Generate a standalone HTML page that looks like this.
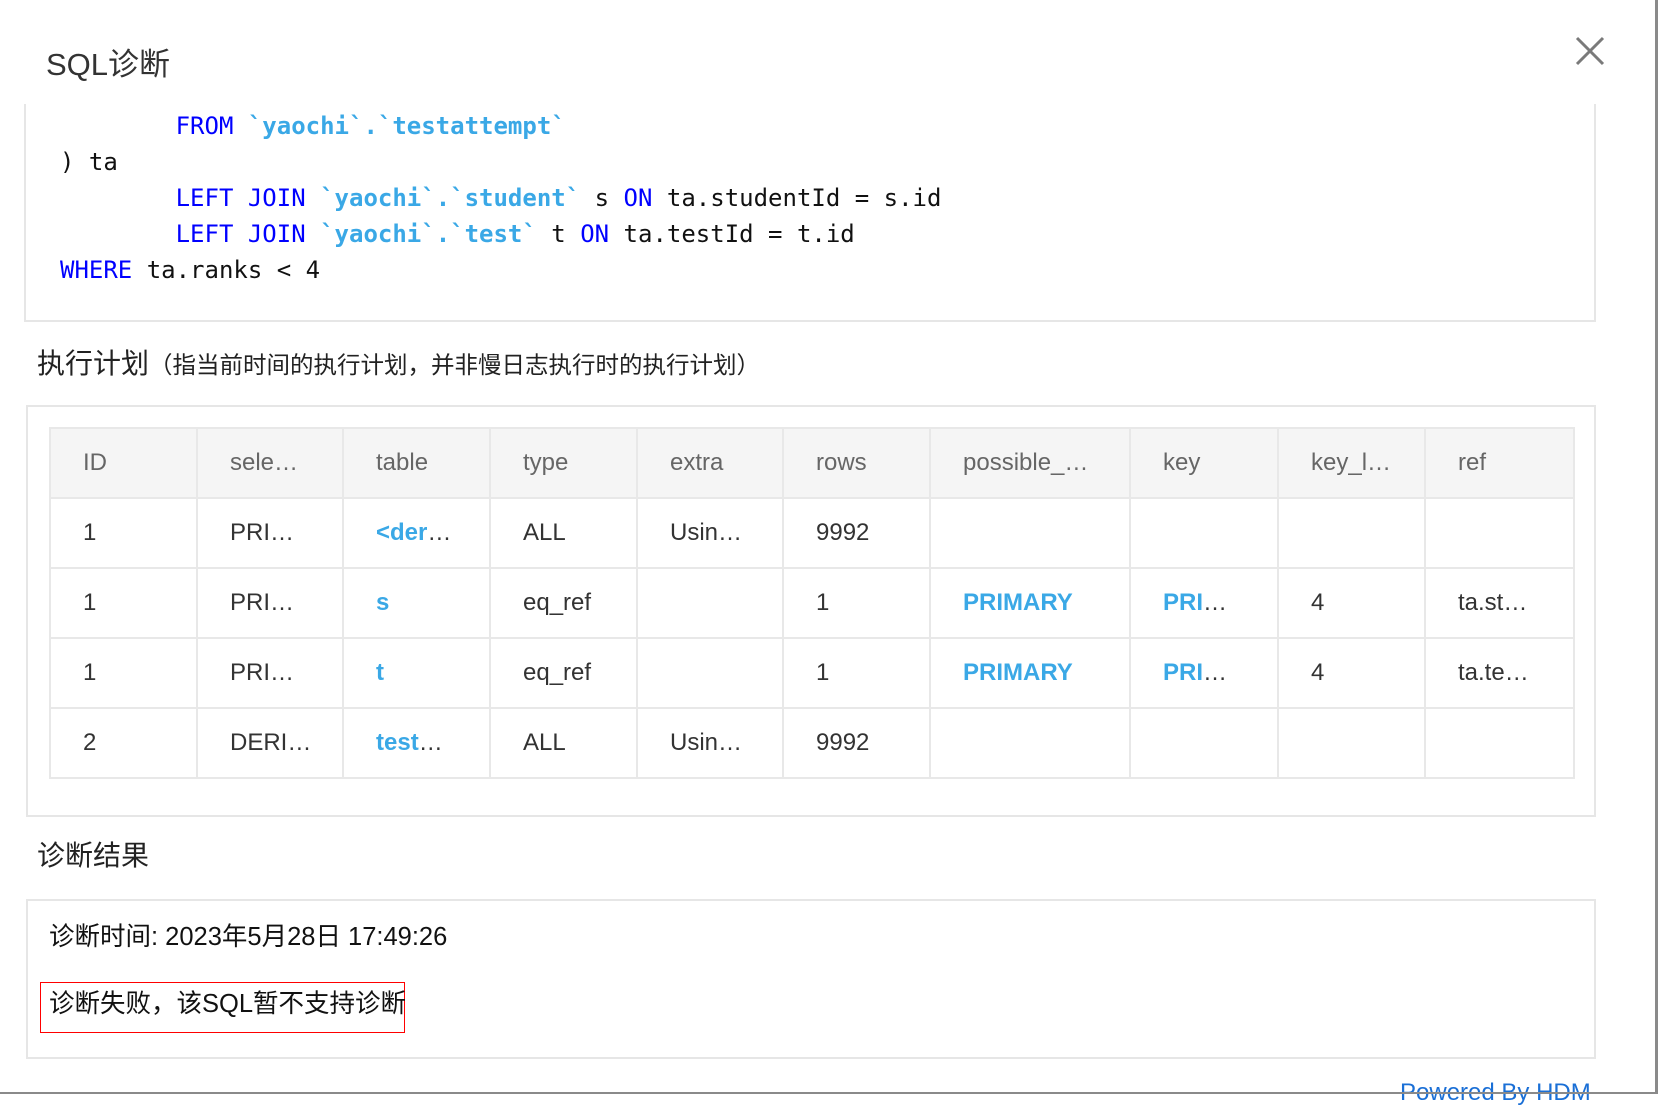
<!DOCTYPE html>
<html><head><meta charset="utf-8"><style>
*{margin:0;padding:0;box-sizing:border-box}
body{width:1658px;height:1094px;background:#fff;position:relative;overflow:hidden;font-family:"Liberation Sans","Noto Sans CJK SC",sans-serif;color:#222}
.abs{position:absolute;line-height:1.15}
.box{position:absolute;border:2px solid #e6e6e6;background:#fff}
.code{font-family:"DejaVu Sans Mono","Liberation Mono",monospace;font-size:24px;white-space:pre;line-height:36px;color:#111}
.k{color:#0000ff}.s{color:#3aa8e6;font-weight:bold}
table{border-collapse:collapse;position:absolute;left:49px;top:427px;table-layout:fixed}
td,th{border:2px solid #e8e8e8;height:70px;padding:0 0 0 32px;text-align:left;font-weight:normal;font-size:24px;color:#333;white-space:nowrap;overflow:hidden}
th{background:#f5f5f5;color:#666}
.b{color:#3aa8e6;font-weight:bold}
</style></head><body>
<div class="abs" style="left:46px;top:47px;font-size:31px;color:#333">SQL诊断</div>
<svg class="abs" style="left:1575px;top:36px" width="30" height="30" viewBox="0 0 30 30"><path d="M2 2L28 28M28 2L2 28" stroke="#7a7a7a" stroke-width="3"/></svg>
<div class="box" style="left:24px;top:104px;width:1572px;height:218px;border-top:none;border-left:2px solid #e6e6e6"></div>
<div class="abs code" style="left:60px;top:108px;line-height:36px">        <span class="k">FROM</span> <span class="s">`yaochi`.`testattempt`</span>
) ta
        <span class="k">LEFT JOIN</span> <span class="s">`yaochi`.`student`</span> s <span class="k">ON</span> ta.studentId = s.id
        <span class="k">LEFT JOIN</span> <span class="s">`yaochi`.`test`</span> t <span class="k">ON</span> ta.testId = t.id
<span class="k">WHERE</span> ta.ranks &lt; 4</div>
<div class="abs" style="left:37px;top:348px;font-size:28px;color:#222">执行计划<span style="font-size:23.5px">（指当前时间的执行计划，并非慢日志执行时的执行计划）</span></div>
<div class="box" style="left:26px;top:405px;width:1570px;height:412px"></div>
<table>
<colgroup><col style="width:147px"><col style="width:146px"><col style="width:147px"><col style="width:147px"><col style="width:146px"><col style="width:147px"><col style="width:200px"><col style="width:148px"><col style="width:147px"><col style="width:149px"></colgroup>
<tr><th>ID</th><th>sele…</th><th>table</th><th>type</th><th>extra</th><th>rows</th><th>possible_…</th><th>key</th><th>key_l…</th><th>ref</th></tr>
<tr><td>1</td><td>PRI…</td><td><span class="b">&lt;der</span>…</td><td>ALL</td><td>Usin…</td><td>9992</td><td></td><td></td><td></td><td></td></tr>
<tr><td>1</td><td>PRI…</td><td class="b">s</td><td>eq_ref</td><td></td><td>1</td><td class="b">PRIMARY</td><td><span class="b">PRI</span>…</td><td>4</td><td>ta.st…</td></tr>
<tr><td>1</td><td>PRI…</td><td class="b">t</td><td>eq_ref</td><td></td><td>1</td><td class="b">PRIMARY</td><td><span class="b">PRI</span>…</td><td>4</td><td>ta.te…</td></tr>
<tr><td>2</td><td>DERI…</td><td><span class="b">test</span>…</td><td>ALL</td><td>Usin…</td><td>9992</td><td></td><td></td><td></td><td></td></tr>
</table>
<div class="abs" style="left:37px;top:840px;font-size:28px;color:#222">诊断结果</div>
<div class="box" style="left:26px;top:899px;width:1570px;height:160px"></div>
<div class="abs" style="left:49px;top:923px;font-size:25.5px;color:#111">诊断时间: 2023年5月28日 17:49:26</div>
<div class="abs" style="left:40px;top:982px;width:365px;height:51px;border:1.5px solid #f00"></div>
<div class="abs" style="left:49px;top:990px;font-size:25.5px;color:#111">诊断失败，该SQL暂不支持诊断</div>
<div class="abs" style="left:1400px;top:1079px;font-size:24px;color:#1a6fd6">Powered By HDM</div>
<div class="abs" style="left:1655px;top:0;width:3px;height:1094px;background:#8a8a8a"></div>
<div class="abs" style="left:0;top:1092px;width:1658px;height:2px;background:#8a8a8a"></div>
</body></html>
